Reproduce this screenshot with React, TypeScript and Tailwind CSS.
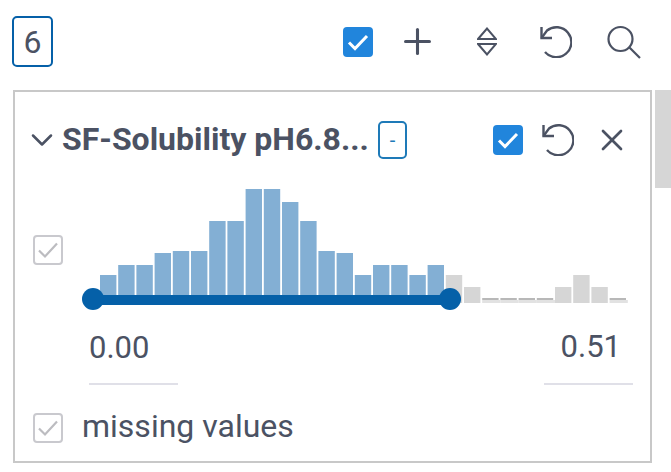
import { ChevronDown, Plus, X } from "lucide-react";

// top y of each histogram bar, relative to the chart box (baseline is y=115)
const bars = [87, 77, 77, 65, 63, 63, 33, 33, 1, 1, 14, 33, 63, 65, 87, 77, 77, 87, 77, 87, 99, 0, 0, 0, 0, 99, 87, 99, 0];

function Undo({ className }: { className?: string }) {
  return (
    <svg viewBox="0 0 32 32" fill="none" stroke="#4b5263" strokeWidth="2.4" className={className}>
      <path d="M1.5 12L7 4.5A15 15 0 1 1 5 26" />
      <path d="M1.5 1v11h10.5" />
    </svg>
  );
}

function BlueCheck() {
  return (
    <div className="flex h-[30px] w-[30px] shrink-0 items-center justify-center rounded-[4px] bg-[#2185dc]">
      <svg viewBox="0 0 30 30" fill="none" stroke="#fff" strokeWidth="3" className="h-[30px] w-[30px]">
        <path d="M6 15.5l6 6L24 9" />
      </svg>
    </div>
  );
}

function GrayCheck() {
  return (
    <div className="flex h-[30px] w-[30px] shrink-0 items-center justify-center rounded-[4px] border-2 border-[#c9c9ce]">
      <svg viewBox="0 0 26 26" fill="none" stroke="#bcbcc0" strokeWidth="2.2" className="h-[26px] w-[26px]">
        <path d="M4 13.5l6 6L22 6.5" />
      </svg>
    </div>
  );
}

function Histogram() {
  return (
    <svg width="530" height="115" className="block">
      {bars.map((top, i) => {
        const x = i * 18.2;
        if (top === 0) {
          return (
            <g key={i}>
              <rect x={x} y={112} width={18.2} height={3} fill="#e2e2e2" />
              <rect x={x} y={110} width={16.4} height={2} fill="#b8b8b8" />
            </g>
          );
        }
        return <rect key={i} x={x} y={top} width={16.4} height={115 - top} fill={i < 19 ? "#83afd4" : "#d6d6d6"} />;
      })}
    </svg>
  );
}

export default function App() {
  return (
    <div className="h-[472px] w-[671px] overflow-hidden bg-white font-['Roboto',sans-serif] text-[#4b5263]">
      <div className="flex h-[90px] items-start">
        <div className="ml-[12px] mt-[16px] flex h-[51px] w-[41px] items-center justify-center rounded-[5px] border-2 border-[#0560a8] text-[32px]">
          6
        </div>
        <div className="ml-[290px] mt-[21px] flex items-center">
          <BlueCheck />
          <Plus className="ml-[24px] h-[41px] w-[41px]" strokeWidth={1.8} />
          <svg viewBox="0 0 20 29" fill="none" stroke="#4b5263" strokeWidth="2" className="ml-[39px] h-[29px] w-[20px]">
            <path d="M1 12L10 1.5 19 12Z" />
            <path d="M1 17L10 27.5 19 17Z" />
          </svg>
          <Undo className="ml-[43px] h-[32px] w-[32px]" />
          <svg viewBox="0 0 34 34" fill="none" stroke="#4b5263" strokeWidth="2.2" className="ml-[35px] h-[34px] w-[34px]">
            <circle cx="13.5" cy="14" r="12" />
            <path d="M22.5 22.5L33 33" />
          </svg>
        </div>
      </div>

      <div className="flex items-start">
        <div className="ml-[13px] h-[373px] w-[639px] shrink-0 border-2 border-[#c8c8c8]">
          <div className="ml-[9px] mt-[29px] flex h-[38px] items-center">
            <ChevronDown className="h-[36px] w-[36px]" strokeWidth={1.7} />
            <span className="ml-[2px] w-[316px] whitespace-nowrap pb-[2px] text-[32px] font-bold">SF-Solubility pH6.8...</span>
            <div className="flex h-[38px] w-[29px] items-center justify-center rounded-[5px] border-2 border-[#1e7ab8] text-[20px] text-[#1e7ab8]">
              -
            </div>
            <div className="ml-[86px]">
              <BlueCheck />
            </div>
            <Undo className="ml-[19px] h-[32px] w-[32px]" />
            <X className="ml-[20px] h-[36px] w-[36px]" strokeWidth={1.8} />
          </div>

          <div className="ml-[18px] mt-[29px] flex items-start">
            <div className="mt-[47px]">
              <GrayCheck />
            </div>
            <div className="relative ml-[37px]">
              <Histogram />
              {/* range slider sits over the bottom of the bars */}
              <div className="absolute left-[-7px] top-[107px] h-[10px] w-[357px] bg-[#0560a8]" />
              <div className="absolute left-[-18px] top-[100px] h-[22px] w-[22px] rounded-full bg-[#0560a8]" />
              <div className="absolute left-[339px] top-[100px] h-[22px] w-[22px] rounded-full bg-[#0560a8]" />
            </div>
          </div>

          <div className="ml-[74px] mr-[17px] mt-[16px] flex justify-between text-[31px]">
            <div className="h-[66px] w-[89px] border-b-2 border-[#e0e0e8] pt-[6px]">0.00</div>
            <div className="h-[66px] w-[89px] border-b-2 border-[#e0e0e8] pr-[12px] pt-[5px] text-right">0.51</div>
          </div>

          <div className="ml-[18px] mt-[26px] flex items-center">
            <GrayCheck />
            <span className="ml-[19px] pb-[4px] text-[32px] leading-[30px]">missing values</span>
          </div>
        </div>
        <div className="ml-[3px] h-[98px] w-[16px] bg-[#d6d6d6]" />
      </div>
    </div>
  );
}
